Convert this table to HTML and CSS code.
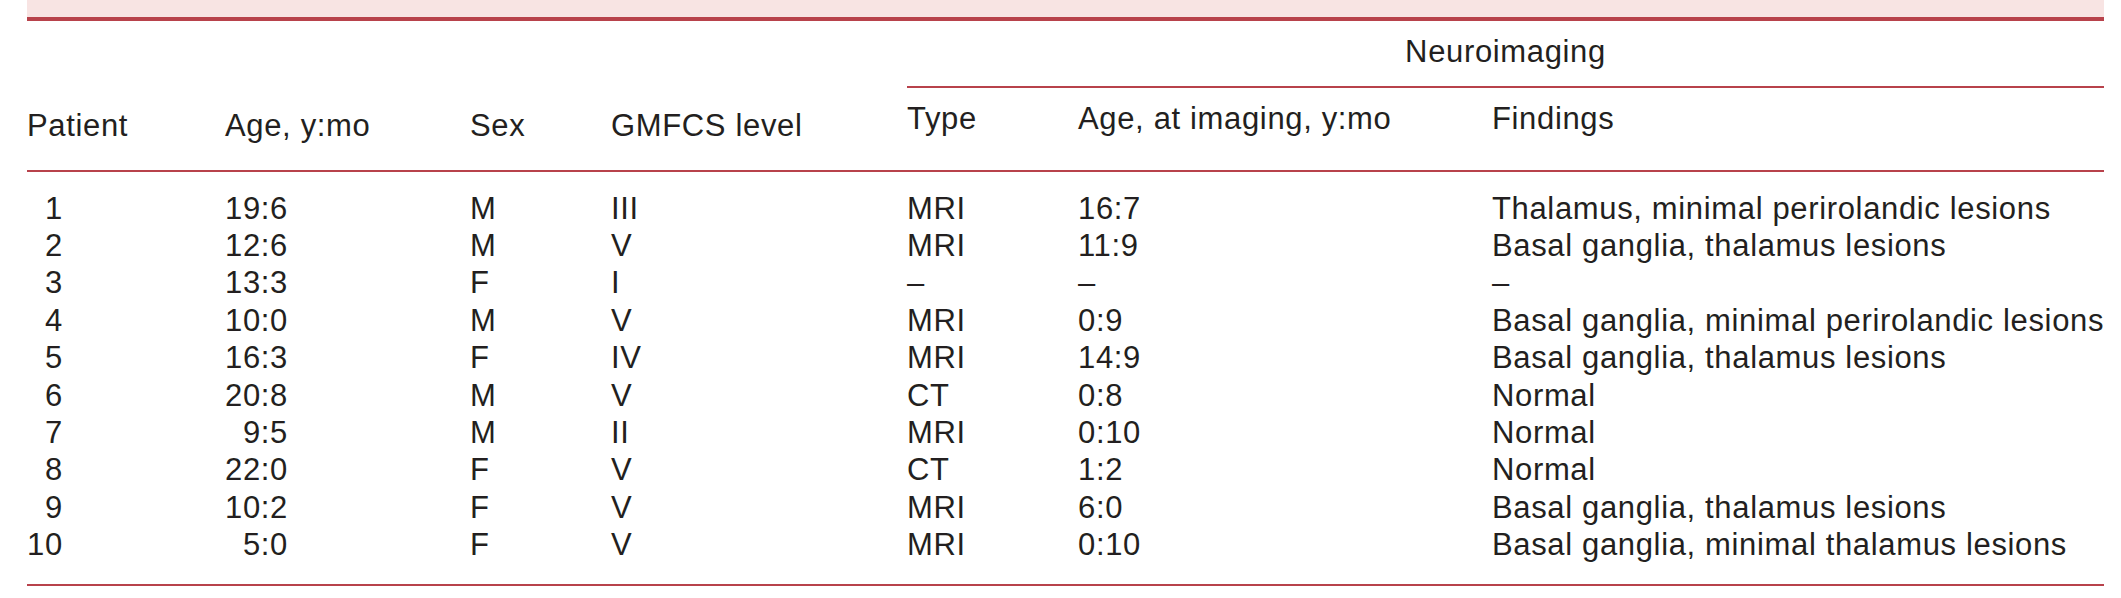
FILE: index.html
```html
<!DOCTYPE html>
<html lang="en">
<head>
<meta charset="utf-8">
<title>Patient characteristics</title>
<link rel="stylesheet" href="styles.css">
</head>
<body>
<div class="wrap">
  <div class="band"></div>
  <table class="tbl">
    <colgroup>
      <col class="c-patient">
      <col class="c-age">
      <col class="c-sex">
      <col class="c-gmfcs">
      <col class="c-type">
      <col class="c-imgage">
      <col class="c-find">
    </colgroup>
    <thead>
      <tr>
        <th class="span" rowspan="2">Patient</th>
        <th class="span" rowspan="2">Age, y:mo</th>
        <th class="span" rowspan="2">Sex</th>
        <th class="span" rowspan="2">GMFCS level</th>
        <th class="group" colspan="3">Neuroimaging</th>
      </tr>
      <tr>
        <th class="sub">Type</th>
        <th class="sub">Age, at imaging, y:mo</th>
        <th class="sub">Findings</th>
      </tr>
    </thead>
    <tbody>
      <tr><td><span class="n2">1</span></td><td><span class="n4">19:6</span></td><td>M</td><td class="lvl">III</td><td>MRI</td><td>16:7</td><td>Thalamus, minimal perirolandic lesions</td></tr>
      <tr><td><span class="n2">2</span></td><td><span class="n4">12:6</span></td><td>M</td><td class="lvl">V</td><td>MRI</td><td>11:9</td><td>Basal ganglia, thalamus lesions</td></tr>
      <tr><td><span class="n2">3</span></td><td><span class="n4">13:3</span></td><td>F</td><td class="lvl">I</td><td>–</td><td>–</td><td>–</td></tr>
      <tr><td><span class="n2">4</span></td><td><span class="n4">10:0</span></td><td>M</td><td class="lvl">V</td><td>MRI</td><td>0:9</td><td>Basal ganglia, minimal perirolandic lesions</td></tr>
      <tr><td><span class="n2">5</span></td><td><span class="n4">16:3</span></td><td>F</td><td class="lvl">IV</td><td>MRI</td><td>14:9</td><td>Basal ganglia, thalamus lesions</td></tr>
      <tr><td><span class="n2">6</span></td><td><span class="n4">20:8</span></td><td>M</td><td class="lvl">V</td><td>CT</td><td>0:8</td><td>Normal</td></tr>
      <tr><td><span class="n2">7</span></td><td><span class="n4">9:5</span></td><td>M</td><td class="lvl">II</td><td>MRI</td><td>0:10</td><td>Normal</td></tr>
      <tr><td><span class="n2">8</span></td><td><span class="n4">22:0</span></td><td>F</td><td class="lvl">V</td><td>CT</td><td>1:2</td><td>Normal</td></tr>
      <tr><td><span class="n2">9</span></td><td><span class="n4">10:2</span></td><td>F</td><td class="lvl">V</td><td>MRI</td><td>6:0</td><td>Basal ganglia, thalamus lesions</td></tr>
      <tr><td><span class="n2">10</span></td><td><span class="n4">5:0</span></td><td>F</td><td class="lvl">V</td><td>MRI</td><td>0:10</td><td>Basal ganglia, minimal thalamus lesions</td></tr>
    </tbody>
  </table>
</div>
</body>
</html>
```

FILE: styles.css
```css
html, body {
  margin: 0;
  padding: 0;
  background: #ffffff;
}

body {
  font-family: "Liberation Sans", Arial, sans-serif;
  font-size: 31px;
  letter-spacing: 0.65px;
  color: #231f20;
}

.wrap {
  margin-left: 27px;
  width: 2077px;
}

.band {
  height: 17px;
  background: #f8e4e3;
  border-bottom: 4px solid #b8424b;
}

.tbl {
  width: 2077px;
  table-layout: fixed;
  border-collapse: separate;
  border-spacing: 0;
  line-height: 37.4px;
}

.c-patient { width: 198px; }
.c-age { width: 245px; }
.c-sex { width: 141px; }
.c-gmfcs { width: 296px; }
.c-type { width: 171px; }
.c-imgage { width: 414px; }
.c-find { width: 612px; }

.tbl th {
  font-weight: normal;
  text-align: left;
  padding: 0;
  white-space: nowrap;
}

.tbl th.span {
  vertical-align: top;
  padding-top: 85.5px;
  border-bottom: 2px solid #b8424b;
}

.tbl th.group {
  text-align: center;
  vertical-align: top;
  padding: 11.5px 0 16.1px 0;
  border-bottom: 2px solid #b8424b;
}

.tbl th.sub {
  vertical-align: top;
  padding: 11.5px 0 33.1px 0;
  border-bottom: 2px solid #b8424b;
}

.tbl td {
  padding: 0;
  white-space: nowrap;
  vertical-align: top;
}

.tbl tbody tr:first-child td {
  padding-top: 17.5px;
}

.tbl tbody tr:last-child td {
  padding-bottom: 20px;
  border-bottom: 2px solid #b8424b;
}

.tbl td.lvl {
  padding-left: 0;
}

.n2 {
  display: inline-block;
  width: calc(2ch + 1.3px);
  text-align: right;
}

.n4 {
  display: inline-block;
  width: calc(3.5ch + 2.6px);
  text-align: right;
}
```
